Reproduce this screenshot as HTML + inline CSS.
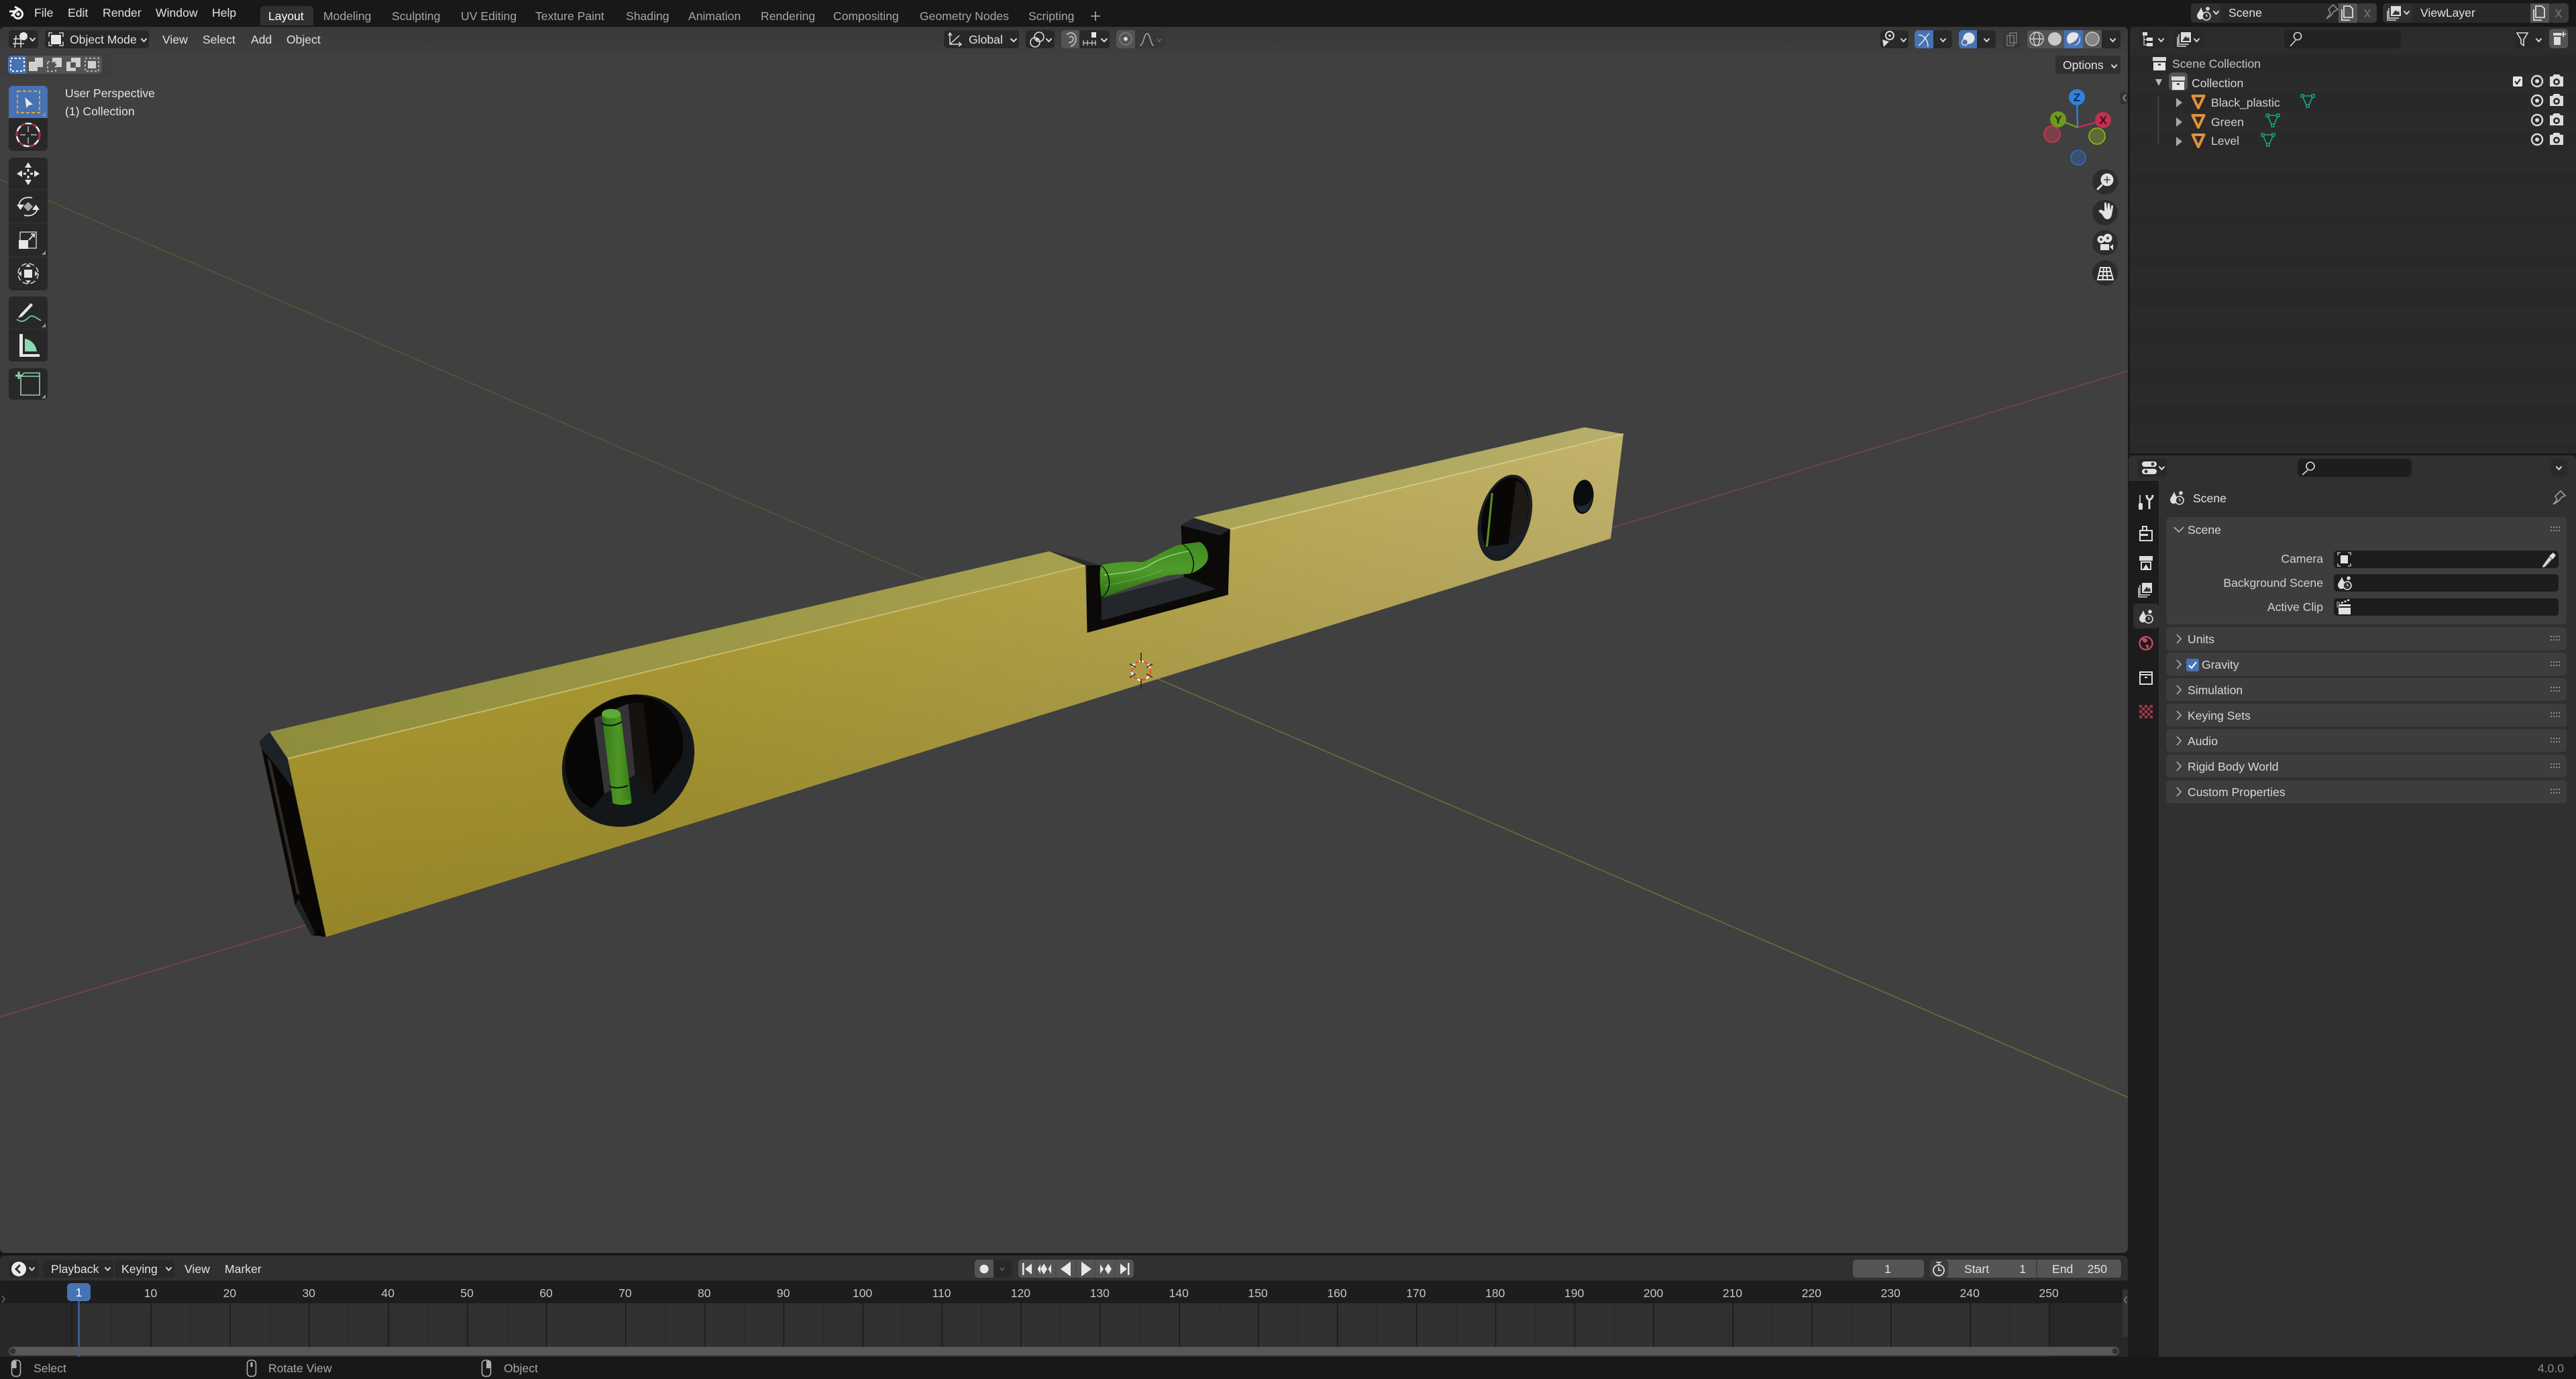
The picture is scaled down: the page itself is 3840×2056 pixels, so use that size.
<!DOCTYPE html>
<html><head><meta charset="utf-8"><title>Blender</title>
<style>
html,body{margin:0;padding:0;background:#181818;width:3840px;height:2056px;overflow:hidden}
svg{display:block;position:absolute;left:0;top:0}
text{font-family:"Liberation Sans",sans-serif;font-size:17.6px;fill:#e2e2e2}
.dim{fill:#a6a6a6}
.lbl{fill:#d0d0d0;text-anchor:end}
.rul{fill:#c4c4c4;text-anchor:middle}
.st{fill:#a8a8a8}
.ch{fill:none;stroke:#dcdcdc;stroke-width:2;stroke-linecap:round;stroke-linejoin:round}
.btn{fill:#282828}
.ln{fill:none;stroke:#dcdcdc;stroke-width:2;stroke-linejoin:round;stroke-linecap:round}
</style></head><body>
<svg width="3840" height="2056" viewBox="0 0 3840 2056" xmlns="http://www.w3.org/2000/svg">
<defs>
<linearGradient id="hdr" x1="0" y1="40" x2="0" y2="84" gradientUnits="userSpaceOnUse"><stop offset="0" stop-color="#383838"/><stop offset="1" stop-color="#404040"/></linearGradient>
<linearGradient id="front" x1="430" y1="0" x2="2420" y2="0" gradientUnits="userSpaceOnUse"><stop offset="0" stop-color="#a3912c"/><stop offset=".3" stop-color="#a69632"/><stop offset=".65" stop-color="#b3a34c"/><stop offset="1" stop-color="#c3b36c"/></linearGradient>
<linearGradient id="shade" x1="900" y1="1010" x2="960" y2="1260" gradientUnits="userSpaceOnUse"><stop offset="0" stop-color="#000" stop-opacity="0"/><stop offset="1" stop-color="#000" stop-opacity=".08"/></linearGradient>
<linearGradient id="topf" x1="402" y1="0" x2="2400" y2="0" gradientUnits="userSpaceOnUse"><stop offset="0" stop-color="#8e8d3c"/><stop offset=".6" stop-color="#a5a04f"/><stop offset="1" stop-color="#b6ae6a"/></linearGradient>
<linearGradient id="vialg" x1="0" y1="0" x2="1" y2="0"><stop offset="0" stop-color="#337a18"/><stop offset=".55" stop-color="#4f9626"/><stop offset="1" stop-color="#347a18"/></linearGradient>
<linearGradient id="bub" x1="0" y1="560" x2="0" y2="820" gradientUnits="userSpaceOnUse"><stop offset="0" stop-color="#3f8a1f"/><stop offset=".5" stop-color="#4f9a2a"/><stop offset="1" stop-color="#2c6c14"/></linearGradient>
<pattern id="ticks" x="224.5" y="1943" width="117.9" height="65" patternUnits="userSpaceOnUse"><rect x="0" width="1.5" height="65" fill="#191919"/><rect x="59" width="1.5" height="65" fill="#2a2a2a"/></pattern>
<pattern id="stripes" x="0" y="81" width="10" height="58" patternUnits="userSpaceOnUse"><rect width="10" height="29" fill="#292929"/><rect y="29" width="10" height="29" fill="#2b2b2b"/></pattern>
<clipPath id="h1"><ellipse cx="930.4" cy="1124.5" rx="95" ry="80" transform="rotate(-45 930.4 1124.5)"/></clipPath>
<clipPath id="h2"><ellipse cx="2243.4" cy="772" rx="33" ry="58" transform="rotate(16 2243.4 772)"/></clipPath>
<symbol id="scene" overflow="visible"><path d="M-4-9C-2-3 1 0 1 3 1 7-2 9-5 9-8 9-10 6-10 3-10 0-6-3-4-9Z" fill="#dcdcdc"/><circle cx="6" cy="-7" r="2.8" fill="#dcdcdc"/><circle cx="4" cy="4" r="6" fill="#303030" stroke="#dcdcdc" stroke-width="1.6"/><path d="M4 1v3h2" fill="none" stroke="#dcdcdc" stroke-width="1.2"/></symbol>
<symbol id="eye" overflow="visible"><circle r="8" fill="none" stroke="#dcdcdc" stroke-width="2.4"/><circle r="3" fill="#dcdcdc"/></symbol>
<symbol id="cam" overflow="visible"><path d="M-10-6h4l2-3h8l2 3h4v15h-20z" fill="#dcdcdc"/><circle cy="2" r="5" fill="#2a2a2a"/><circle cy="2" r="2.4" fill="#dcdcdc"/></symbol>
<symbol id="mesh" overflow="visible"><path d="M-8.5-9H8.5L0 9Z" fill="none" stroke="#e0913a" stroke-width="4" stroke-linejoin="round"/></symbol>
<symbol id="md" overflow="visible"><path d="M-8-7H8L1 9H-1Z" fill="none" stroke="#13b08c" stroke-width="1.5"/><g fill="#282828" stroke="#13b08c" stroke-width="1.4"><rect x="-10" y="-9" width="4" height="4"/><rect x="6" y="-9" width="4" height="4"/><rect x="-2" y="6" width="4" height="4"/></g></symbol>
<symbol id="grip" overflow="visible"><g fill="#8e8e8e"><rect x="0" y="0" width="2" height="2"/><rect x="4" y="0" width="2" height="2"/><rect x="8" y="0" width="2" height="2"/><rect x="12" y="0" width="2" height="2"/><rect x="0" y="5" width="2" height="2"/><rect x="4" y="5" width="2" height="2"/><rect x="8" y="5" width="2" height="2"/><rect x="12" y="5" width="2" height="2"/></g></symbol>
<symbol id="crn" overflow="visible"><path d="M6-6V0H0Z" fill="#8f8f8f"/></symbol>
<symbol id="mouse" overflow="visible"><rect x="-6.5" y="-12" width="13" height="24" rx="5" fill="none" stroke="#b0b0b0" stroke-width="1.6"/></symbol>
<symbol id="coll" overflow="visible"><rect x="-10" y="-10" width="20" height="6" fill="#d8d8d8"/><path d="M-9-2H9V10H-9Z" fill="#e6e6e6"/><rect x="-2" y="0" width="4" height="2.5" fill="#333"/></symbol>
<symbol id="doc" overflow="visible"><path d="M-6-11H3L7-7V6H-6Z" fill="none" stroke="#dcdcdc" stroke-width="1.8"/><path d="M-9-6V10H3" fill="none" stroke="#dcdcdc" stroke-width="1.8"/></symbol>
<symbol id="vlayer" overflow="visible"><rect x="-6" y="-10" width="15" height="15" fill="#dcdcdc"/><path d="M-4 3 1-4 4-1 6-3 7 3Z" fill="#333"/><path d="M-9-7V8H6M-11-3V11H2" fill="none" stroke="#dcdcdc" stroke-width="1.4"/></symbol>
</defs>

<!-- app bg -->
<rect width="3840" height="2056" fill="#181818"/>

<!-- VIEWPORT -->
<rect x="0" y="40" width="3172" height="1828" rx="7" fill="#404040"/>
<path d="M7 40H3165a7 7 0 0 1 7 7V84H0V47a7 7 0 0 1 7-7Z" fill="url(#hdr)"/>

<!-- axes -->
<line x1="0" y1="1516" x2="470" y2="1375" stroke="#83404e" stroke-width="1.6"/>
<line x1="2400" y1="788" x2="3172" y2="553" stroke="#7b434e" stroke-width="1.6"/>
<line x1="0" y1="268" x2="1420" y2="881" stroke="#4f5a38" stroke-width="1.6"/>
<line x1="1700" y1="1001" x2="3172" y2="1636" stroke="#5f7034" stroke-width="1.7"/>

<!-- model top faces -->
<polygon points="402,1091 429,1131 1618,843 1564,822" fill="url(#topf)"/>
<polygon points="1778.6,771.5 2362,637 2420,647 1833.7,789" fill="url(#topf)"/>
<!-- left cap -->
<polygon points="386.7,1105 401.7,1092 428,1131 486,1397 464,1394 440,1350 390,1117" fill="#090705"/>
<polygon points="386.7,1105 401.7,1092 428,1131 436,1175 410,1140 390,1117" fill="#1d2226"/>
<polygon points="440,1350 445,1340 470,1392 464,1394" fill="#1d2226"/>
<polygon points="398,1130 404,1136 447,1335 442,1332" fill="#302b25"/>
<!-- front -->
<polygon points="429,1131 1618,843 1620.6,943.3 1830.7,886.7 1833.7,789 2420,647 2401,803 486,1397" fill="url(#front)"/>
<polygon points="429,1131 1618,843 1620.6,943.3 1830.7,886.7 1833.7,789 2420,647 2401,803 486,1397" fill="url(#shade)"/>
<line x1="429" y1="1131" x2="1618" y2="843" stroke="#c9b96c" stroke-width="2"/>
<line x1="1834" y1="789" x2="2420" y2="647" stroke="#d4c883" stroke-width="2"/>

<!-- notch -->
<polygon points="1564.3,821.7 1618,843 1641,843 1600,830" fill="#2a2c2e"/>
<polygon points="1619.4,842.7 1642,842.7 1642,925 1812.3,878.3 1764.5,860 1760.3,783.3 1778.6,772.7 1833.7,789.3 1830.7,886.7 1620.6,943.3" fill="#0c0a08"/>
<polygon points="1642,891.7 1642,925 1812.3,878.3 1764.5,860" fill="#23272b"/>
<polygon points="1760.3,783.3 1778.6,772.7 1833.7,789.3 1818.4,798.3" fill="#23262a"/>
<g transform="translate(1500,620) scale(.6124,.3333)">
<path d="M230 668C260 655 300 648 330 655 355 640 380 605 415 580 440 570 455 568 472 564 488 585 494 615 490 645 484 670 470 690 450 705 425 712 400 705 375 725 340 740 300 770 232 815 228 770 226 720 230 668Z" fill="url(#bub)"/>
<path d="M238 712C280 705 320 695 345 672 365 645 400 620 445 605" fill="none" stroke="#b6e49a" stroke-width="4" opacity=".75"/>
<path d="M240 760C290 740 340 725 380 690" fill="none" stroke="#7cba58" stroke-width="4" opacity=".5"/>
<path d="M230 668C252 700 262 770 232 815" fill="none" stroke="#0b0d08" stroke-width="2.5"/>
<path d="M430 574C456 610 462 670 450 705" fill="none" stroke="#0b0d08" stroke-width="2.5"/>
</g>

<!-- large hole -->
<ellipse cx="936.5" cy="1134" rx="105" ry="92" transform="rotate(-45 936.5 1134)" fill="#14171a"/>
<ellipse cx="930.4" cy="1124.5" rx="95" ry="80" transform="rotate(-45 930.4 1124.5)" fill="#080604"/>
<g clip-path="url(#h1)">
<polygon points="885.5,1071 936.5,1049 946.7,1155 901,1184" fill="#343436"/>
<polygon points="936.5,1049 959,1047 975,1186 946.7,1155" fill="#15120f"/>
<polygon points="901,1184 947,1155 975,1186 1018,1126 1030,1230 860,1230" fill="#14171a"/>
</g>
<polygon points="897,1065 925,1063 941.6,1194 913.6,1198" fill="url(#vialg)"/>
<ellipse cx="911" cy="1064" rx="14" ry="7" fill="#5cac38"/>
<ellipse cx="927.6" cy="1196" rx="14" ry="4" fill="#4b9424"/>
<path d="M896 1078C905 1084 918 1082 927 1076" fill="none" stroke="#0c120a" stroke-width="2"/>
<path d="M908 1172C917 1176 928 1175 936 1171" fill="none" stroke="#0c120a" stroke-width="2"/>

<!-- right hole -->
<ellipse cx="2243.4" cy="772" rx="38" ry="66" transform="rotate(16 2243.4 772)" fill="#1a1e22"/>
<ellipse cx="2243.4" cy="768" rx="33" ry="58" transform="rotate(16 2243.4 768)" fill="#090705"/>
<g clip-path="url(#h2)"><polygon points="2262,700 2290,700 2270,800 2248,815" fill="#1e1a15"/><polygon points="2215,815 2248,811 2270,790 2270,840 2215,840" fill="#1a2025"/></g>
<line x1="2224.4" y1="735" x2="2216.5" y2="815" stroke="#5c8e22" stroke-width="3"/>
<ellipse cx="2360.4" cy="740.7" rx="15" ry="25.5" transform="rotate(6 2360.4 740.7)" fill="#0a0c0e"/>
<path d="M2349 752C2352 764 2362 768 2368 758 2373 750 2374 745 2374 740 2370 752 2358 758 2349 752Z" fill="#1c2833"/>

<!-- 3d cursor -->
<circle cx="1701" cy="1000" r="14" fill="none" stroke="#f4f4f4" stroke-width="2.5"/>
<circle cx="1701" cy="1000" r="14" fill="none" stroke="#e8501e" stroke-width="2.5" stroke-dasharray="7 7"/>
<path d="M1701 973V988M1701 1012V1028M1684 990l9 5M1718 990l-9 5M1684 1010l9-5M1718 1010l-9-5" stroke="#222" stroke-width="1.5" fill="none"/>

<!-- top bar -->
<g fill="none" stroke="#f0f0f0" stroke-width="3"><circle cx="27" cy="21" r="6.5"/><path d="M14 17H24M17 24 27 14M22 10 31 15"/></g><circle cx="27" cy="21" r="2.6" fill="#f0f0f0"/>
<text x="51" y="25">File</text><text x="101" y="25">Edit</text><text x="153" y="25">Render</text><text x="232" y="25">Window</text><text x="316" y="25">Help</text>
<path d="M394 9H461a6 6 0 0 1 6 6V38H388V15a6 6 0 0 1 6-6Z" fill="#303030"/>
<text x="400" y="30" style="fill:#fff">Layout</text>
<g>
<text class="dim" x="482" y="30">Modeling</text><text class="dim" x="584" y="30">Sculpting</text><text class="dim" x="687" y="30">UV Editing</text><text class="dim" x="798" y="30">Texture Paint</text><text class="dim" x="933" y="30">Shading</text><text class="dim" x="1026" y="30">Animation</text><text class="dim" x="1134" y="30">Rendering</text><text class="dim" x="1242" y="30">Compositing</text><text class="dim" x="1371" y="30">Geometry Nodes</text><text class="dim" x="1533" y="30">Scripting</text>
</g>
<path d="M1633 17V31M1626 24H1640" stroke="#b0b0b0" stroke-width="1.6"/>

<!-- Scene / ViewLayer widgets -->
<rect x="3266" y="5" width="277" height="29" rx="5" fill="#282828"/>
<rect x="3486" y="5" width="28" height="29" fill="#545454"/><rect x="3514" y="5" width="29" height="29" rx="5" fill="#3a3a3a"/>
<rect x="3266" y="5" width="44" height="29" rx="5" fill="#303030"/>
<use href="#scene" x="3285" y="20"/><path class="ch" d="M3300 17l3.500 4 3.500-4"/>
<text x="3322" y="25">Scene</text>
<path d="M3468 28l6-8-3-6 7-7 7 7-6 3-4 6z" fill="none" stroke="#8a8a8a" stroke-width="1.6"/>
<use href="#doc" x="3500" y="20"/><path d="M3525 14l8 12M3533 14l-8 12" stroke="#6e6e6e" stroke-width="1.8"/>
<rect x="3552" y="5" width="277" height="29" rx="5" fill="#282828"/>
<rect x="3772" y="5" width="28" height="29" fill="#545454"/><rect x="3800" y="5" width="29" height="29" rx="5" fill="#3a3a3a"/>
<rect x="3552" y="5" width="44" height="29" rx="5" fill="#303030"/>
<use href="#vlayer" x="3570" y="19"/><path class="ch" d="M3584 17l3.500 4 3.500-4"/>
<text x="3608" y="25">ViewLayer</text>
<use href="#doc" x="3786" y="20"/><path d="M3810 14l8 12M3818 14l-8 12" stroke="#6e6e6e" stroke-width="1.8"/>

<!-- viewport header left -->
<rect class="btn" x="13" y="45" width="44" height="27" rx="5"/>
<path d="M20 58H36M19 65H36M24 53 22 71M31 53V71" stroke="#dcdcdc" stroke-width="1.5" fill="none"/><circle cx="35" cy="54" r="6" fill="#e6e6e6"/><path class="ch" d="M45 57l3.500 4 3.500-4"/>
<rect class="btn" x="67" y="45" width="155" height="27" rx="5"/>
<path d="M73 55V49H78M88 49H94V55M73 62V68H78M88 68H94V62" fill="none" stroke="#cfcfcf" stroke-width="1.5"/><rect x="76" y="52" width="15" height="14" fill="#e6e6e6"/>
<text x="104" y="65">Object Mode</text><path class="ch" d="M211 58l3.500 4 3.500-4"/>
<text x="242" y="65">View</text><text x="302" y="65">Select</text><text x="374" y="65">Add</text><text x="427" y="65">Object</text>

<!-- select modes -->
<rect x="0" y="80" width="165" height="36" fill="#3a3a3a" opacity=".5"/>
<rect x="12" y="83" width="140" height="27" rx="5" fill="#545454"/>
<path d="M17 83H39V110H17a5 5 0 0 1-5-5V88a5 5 0 0 1 5-5Z" fill="#4772b3"/>
<rect x="16" y="87" width="20" height="19" fill="none" stroke="#fff" stroke-width="2" stroke-dasharray="3 3"/>
<path d="M43 106V92H52V86H64V100H56V106Z" fill="#cfcfcf"/>
<rect x="71" y="92" width="12" height="14" fill="none" stroke="#cfcfcf" stroke-width="1.6" stroke-dasharray="3 3"/><path d="M78 86H92V100H84V92H78Z" fill="#cfcfcf"/>
<path d="M99 92H106V86H120V100H113V106H99ZM105 98V100H107V98Z" fill="#cfcfcf"/><rect x="105" y="93" width="8" height="8" fill="#555"/>
<rect x="127" y="87" width="20" height="19" fill="none" stroke="#cfcfcf" stroke-width="1.6" stroke-dasharray="3 3"/><rect x="131" y="91" width="12" height="11" fill="#cfcfcf"/>

<!-- Tools -->
<rect x="13" y="128" width="58" height="97" rx="6" fill="#282828"/>
<path d="M19 128H65a6 6 0 0 1 6 6V176H13V134a6 6 0 0 1 6-6Z" fill="#4772b3"/>
<rect x="26" y="136" width="33" height="32" fill="none" stroke="#f0a523" stroke-width="2" stroke-dasharray="5 3"/>
<path d="M37.300 145 49 156 43 156.700 39.300 161Z" fill="#e8e8e8"/><use href="#crn" x="62" y="173"/>
<circle cx="42" cy="201" r="17" fill="none" stroke="#f0f0f0" stroke-width="2.6"/><circle cx="42" cy="201" r="17" fill="none" stroke="#b0283a" stroke-width="2.6" stroke-dasharray="8 9"/>
<path d="M42 188V197M42 205V214M30 201H38M46 201H55" stroke="#b8b8b8" stroke-width="1.5"/>
<rect x="13" y="235" width="58" height="198" rx="6" fill="#282828"/>
<path d="M13 283H71M13 333H71M13 383H71" stroke="#333" stroke-width="1"/>
<g fill="#e6e6e6"><path d="M42 242 47 250H37ZM42 276 37 268H47ZM25 259 33 254V264ZM59 259 51 264V254Z"/><rect x="40.500" y="252" width="3" height="4"/><rect x="40.500" y="262" width="3" height="4"/><rect x="35" y="257.500" width="4" height="3"/><rect x="45" y="257.500" width="4" height="3"/></g>
<path d="M28 306C30 296 38 293 48 295M56 310C54 320 46 323 36 321" fill="none" stroke="#e6e6e6" stroke-width="1.8"/>
<path d="M42 301 49 308 42 315 35 308Z" fill="#a8a8a8"/><path d="M25 305H36L30.500 313ZM48 313H59L53.500 305Z" fill="#e6e6e6"/>
<rect x="30" y="346" width="24" height="24" fill="none" stroke="#bdbdbd" stroke-width="1.6"/><rect x="28" y="358" width="14" height="13" fill="#e6e6e6"/><path d="M43 358 51 349M46 349H51V354" fill="none" stroke="#e6e6e6" stroke-width="1.8"/><use href="#crn" x="62" y="380"/>
<circle cx="42" cy="408" r="15" fill="none" stroke="#cfcfcf" stroke-width="1.6" stroke-dasharray="8 4"/><rect x="36" y="402" width="12" height="12" fill="#e6e6e6"/><path d="M42 393 46 398H38ZM42 423 38 418H46ZM27 408 32 404V412ZM57 408 52 412V404Z" fill="#cfcfcf"/>
<rect x="13" y="442" width="58" height="97" rx="6" fill="#282828"/>
<path d="M13 490H71" stroke="#333"/>
<path d="M30 469 46 452 49 455 33 472 27 474Z" fill="#e6e6e6"/><path d="M25 476C32 482 38 478 43 473 48 468 54 474 61 478" fill="none" stroke="#79c9a6" stroke-width="1.8"/><use href="#crn" x="62" y="488"/>
<path d="M29 498H34V528H59V532H29Z" fill="#e6e6e6"/><path d="M37 522V505C47 507 53 513 55 524H37Z" fill="#8cd8b0"/>
<rect x="13" y="549" width="58" height="47" rx="6" fill="#282828"/>
<path d="M31 561H59V589H31ZM31 561 36 556H59V584L59 589M59 561V556" fill="none" stroke="#8ed3ac" stroke-width="1.6"/>
<path d="M28 554V565M23 560H34" stroke="#8ed3ac" stroke-width="3"/><use href="#crn" x="62" y="594"/>
<text x="97" y="145">User Perspective</text><text x="97" y="172">(1) Collection</text>

<!-- center header -->
<rect class="btn" x="1407" y="45" width="112" height="27" rx="5"/>
<path d="M1416 50V66H1432M1416 66 1430 53M1414 53 1416 49 1419 53M1429 63 1433 66 1429 69" fill="none" stroke="#dcdcdc" stroke-width="1.5"/>
<text x="1444" y="65">Global</text><path class="ch" d="M1507 58l4 4 4-4"/>
<rect class="btn" x="1529" y="45" width="43" height="27" rx="5"/>
<circle cx="1549" cy="55" r="7" fill="none" stroke="#dcdcdc" stroke-width="1.6"/><circle cx="1543" cy="63" r="7" fill="none" stroke="#dcdcdc" stroke-width="1.6"/><circle cx="1546" cy="59" r="2" fill="#dcdcdc"/><path class="ch" d="M1560 58l3.500 4 3.500-4"/>
<rect class="btn" x="1582" y="45" width="72" height="27" rx="5"/><path d="M1587 45H1609V72H1587a5 5 0 0 1-5-5V50a5 5 0 0 1 5-5Z" fill="#545454"/>
<path d="M1590 52C1594 47 1604 48 1604 58 1604 64 1600 68 1596 69M1594 56C1596 53 1600 54 1600 58 1600 61 1597 63 1593 64" fill="none" stroke="#b4b4b4" stroke-width="2"/>
<rect x="1627" y="48" width="7" height="8" fill="#e6e6e6"/><path d="M1614 64H1634M1615 60V68M1621 60V68M1628 60V68M1633 60V68" stroke="#cfcfcf" stroke-width="1.2"/><path class="ch" d="M1642 58l4 4 4-4"/>
<rect x="1664" y="45" width="73" height="27" rx="5" fill="#373737"/><path d="M1669 45H1692V72H1669a5 5 0 0 1-5-5V50a5 5 0 0 1 5-5Z" fill="#545454"/>
<circle cx="1678" cy="58" r="9" fill="none" stroke="#808080" stroke-width="1.5"/><circle cx="1678" cy="58" r="3" fill="#d8d8d8"/>
<path d="M1699 68C1705 68 1705 50 1710 50 1715 50 1715 68 1720 68" fill="none" stroke="#a6a6a6" stroke-width="1.5"/><path d="M1725 58l3 4 3-4" fill="none" stroke="#666" stroke-width="1.5"/>

<!-- right header -->
<rect class="btn" x="2803" y="45" width="42" height="27" rx="5"/>
<circle cx="2817" cy="53" r="6" fill="none" stroke="#dcdcdc" stroke-width="2"/><circle cx="2817" cy="53" r="1.8" fill="#dcdcdc"/><path d="M2806 59 2816 62 2808 70Z" fill="#dcdcdc"/><path class="ch" d="M2834 58l3.500 4 3.500-4"/>
<rect class="btn" x="2854" y="45" width="56" height="27" rx="5"/><path d="M2859 45H2882V72H2859a5 5 0 0 1-5-5V50a5 5 0 0 1 5-5Z" fill="#4772b3"/>
<path d="M2860 68C2870 60 2872 52 2876 50M2860 52C2868 52 2874 60 2874 70" fill="none" stroke="#e6e6e6" stroke-width="1.5"/><path class="ch" d="M2893 58l3.500 4 3.500-4"/>
<rect class="btn" x="2920" y="45" width="55" height="27" rx="5"/><path d="M2925 45H2947V72H2925a5 5 0 0 1-5-5V50a5 5 0 0 1 5-5Z" fill="#4772b3"/>
<circle cx="2935" cy="57" r="8.500" fill="#e6e6e6"/><circle cx="2929" cy="63" r="4.500" fill="#4772b3" stroke="#e6e6e6" stroke-width="1.3"/><path class="ch" d="M2958 58l3.500 4 3.500-4"/>
<rect x="2986" y="45" width="26" height="27" rx="5" fill="#373737"/><rect x="2996" y="49" width="10" height="15" fill="none" stroke="#7a7a7a" stroke-width="1.4"/><rect x="2992" y="53" width="10" height="15" fill="none" stroke="#7a7a7a" stroke-width="1.4"/>
<rect x="3022" y="45" width="139" height="27" rx="5" fill="#282828"/>
<path d="M3027 45H3133V72H3027a5 5 0 0 1-5-5V50a5 5 0 0 1 5-5Z" fill="#545454"/>
<rect x="3077" y="45" width="28" height="27" fill="#4772b3"/>
<g fill="none" stroke="#cfcfcf" stroke-width="1.4"><circle cx="3036" cy="58" r="10"/><ellipse cx="3036" cy="58" rx="4.500" ry="10"/><path d="M3026 58H3046"/></g>
<circle cx="3063" cy="58" r="10" fill="#c8c8c8"/>
<circle cx="3091" cy="58" r="10" fill="#e6e6e6"/><path d="M3084 65C3092 64 3098 58 3099 50 3102 58 3098 68 3089 68Z" fill="#4772b3"/>
<circle cx="3119" cy="58" r="10" fill="#848484" stroke="#cfcfcf" stroke-width="1.4"/><path class="ch" d="M3146 58l3.500 4 3.500-4"/>
<rect x="3064" y="83" width="97" height="27" rx="5" fill="#303030"/>
<text x="3075" y="103">Options</text><path class="ch" d="M3148 97l3.500 4 3.500-4"/>

<!-- gizmo -->
<line x1="3097" y1="190" x2="3096" y2="150" stroke="#2e82dc" stroke-width="2.5"/>
<line x1="3097" y1="190" x2="3130" y2="181" stroke="#c03050" stroke-width="2.5"/>
<line x1="3097" y1="190" x2="3072" y2="180" stroke="#6f9a20" stroke-width="2.5"/>
<circle cx="3059" cy="200" r="12" fill="#7a4048" stroke="#e0304f" stroke-width="1.6"/>
<circle cx="3126" cy="203" r="12" fill="#5f6a38" stroke="#8fc010" stroke-width="1.6"/>
<circle cx="3098" cy="235" r="11" fill="#3d5070" stroke="#2a70c0" stroke-width="1.6"/>
<circle cx="3096" cy="145" r="12" fill="#2e82dc"/><circle cx="3135" cy="179" r="12" fill="#c03050"/><circle cx="3068" cy="178" r="12" fill="#6f9a20"/>
<text x="3096" y="151" style="font-weight:bold;fill:#0e2a4a;text-anchor:middle;font-size:17px">Z</text>
<text x="3135" y="185" style="font-weight:bold;fill:#3d0e18;text-anchor:middle;font-size:17px">X</text>
<text x="3068" y="184" style="font-weight:bold;fill:#1f2e08;text-anchor:middle;font-size:17px">Y</text>
<rect x="3160" y="137" width="12" height="18" rx="3" fill="#333"/><path d="M3169 141l-4 5 4 5" fill="none" stroke="#9a9a9a" stroke-width="1.6"/>
<g fill="#2c2c2c"><circle cx="3138" cy="271" r="19"/><circle cx="3138" cy="317" r="19"/><circle cx="3138" cy="362" r="19"/><circle cx="3138" cy="407" r="19"/></g>
<circle cx="3141" cy="268" r="9.500" fill="#e2e2e2"/><path d="M3141 263V273M3136 268H3146" stroke="#222" stroke-width="1.3"/><path d="M3133 276 3127 282" stroke="#e2e2e2" stroke-width="3" stroke-linecap="round"/>
<path d="M3129 316C3133 318 3135 322 3137 325 3142 329 3147 326 3148 320L3150 308C3150 305 3147 305 3147 308L3146 314 3145 305C3145 302 3142 302 3142 305L3141 313 3140 304C3140 301 3137 301 3137 304V315L3133 313C3130 312 3128 314 3129 316Z" fill="#e2e2e2"/>
<circle cx="3132" cy="357" r="5.500" fill="#e2e2e2"/><circle cx="3142" cy="355" r="6.500" fill="#e2e2e2"/><circle cx="3132" cy="357" r="2" fill="#444"/><circle cx="3142" cy="355" r="2" fill="#444"/><rect x="3131" y="364" width="13" height="9" fill="#e2e2e2"/><path d="M3145 368 3150 364V373Z" fill="#e2e2e2"/>
<path d="M3131 399H3145L3150 417H3127ZM3129.500 405H3146.500M3128 411H3148.500M3136 399 3134.500 417M3140 399 3141.500 417" fill="none" stroke="#e2e2e2" stroke-width="2"/>

<!-- OUTLINER -->
<rect x="3175" y="40" width="665" height="636" rx="7" fill="#2a2a2a"/>
<rect x="3175" y="81" width="665" height="595" fill="url(#stripes)"/>
<path d="M3182 40H3840V81H3175V47a7 7 0 0 1 7-7Z" fill="#2c2c2c"/>
<rect class="btn" x="3187" y="43" width="44" height="29" rx="5"/>
<g fill="#dcdcdc"><rect x="3194" y="48" width="7" height="5"/><rect x="3200" y="56" width="9" height="5"/><rect x="3200" y="64" width="9" height="5"/></g><path d="M3196 53V67H3200M3196 59H3200" fill="none" stroke="#dcdcdc" stroke-width="1.2"/><path class="ch" d="M3218 58l3.500 4 3.500-4"/>
<rect class="btn" x="3240" y="43" width="45" height="29" rx="5"/><use href="#vlayer" x="3257" y="58"/><path class="ch" d="M3271 58l3.500 4 3.500-4"/>
<rect x="3405" y="45" width="174" height="27" rx="6" fill="#222"/><circle cx="3425" cy="54" r="5.500" fill="none" stroke="#dcdcdc" stroke-width="1.6"/><path d="M3422 60 3414 69" stroke="#dcdcdc" stroke-width="1.6"/>
<rect class="btn" x="3748" y="43" width="45" height="29" rx="5"/><path d="M3752 49H3768L3762 59V68L3758 65V59Z" fill="none" stroke="#dcdcdc" stroke-width="1.6"/><path class="ch" d="M3781 58l3.500 4 3.500-4"/>
<rect x="3800" y="43" width="28" height="29" rx="5" fill="#545454"/>
<path d="M3806 49H3818V53H3806ZM3807 55H3817V67H3807Z" fill="#dcdcdc"/><path d="M3821 47V55M3817 51H3825" stroke="#dcdcdc" stroke-width="1.8"/>
<use href="#coll" x="3219" y="95"/><text x="3238" y="101" style="fill:#c4c4c4">Scene Collection</text>
<rect x="3233" y="108" width="28" height="27" rx="6" fill="#545454"/>
<path d="M3213 118H3223L3218 128Z" fill="#b8b8b8"/>
<use href="#coll" x="3247" y="124"/><text x="3267" y="130" style="fill:#d8d8d8">Collection</text>
<line x1="3217.500" y1="143" x2="3217.500" y2="216" stroke="#4a4a4a" stroke-width="1.500"/>
<g fill="#a8a8a8"><path d="M3244 146V160L3253 153Z"/><path d="M3244 175V189L3253 182Z"/><path d="M3244 204V218L3253 211Z"/></g>
<use href="#mesh" x="3277" y="152"/><use href="#mesh" x="3277" y="181"/><use href="#mesh" x="3277" y="210"/>
<text x="3296" y="159" style="fill:#d0d0d0">Black_plastic</text><text x="3296" y="188" style="fill:#d0d0d0">Green</text><text x="3296" y="216" style="fill:#d0d0d0">Level</text>
<use href="#md" x="3440" y="150"/><use href="#md" x="3388" y="179"/><use href="#md" x="3381" y="208"/>
<rect x="3746" y="114" width="14" height="15" rx="2" fill="#e8e8e8"/><path d="M3749 121l3 4 5-7" fill="none" stroke="#222" stroke-width="2"/>
<use href="#eye" x="3782" y="121"/><use href="#eye" x="3782" y="150"/><use href="#eye" x="3782" y="179"/><use href="#eye" x="3782" y="208"/>
<use href="#cam" x="3811" y="120"/><use href="#cam" x="3811" y="149"/><use href="#cam" x="3811" y="178"/><use href="#cam" x="3811" y="207"/>

<!-- PROPERTIES -->
<rect x="3173" y="679" width="667" height="1344" rx="7" fill="#303030"/>
<rect x="3173" y="717" width="45" height="1306" fill="#1c1c1c"/>
<rect class="btn" x="3187" y="684" width="43" height="27" rx="5"/>
<rect x="3193" y="688" width="22" height="8" rx="4" fill="#e0e0e0"/><rect x="3193" y="699" width="22" height="8" rx="4" fill="#e0e0e0"/><circle cx="3209" cy="692" r="2.500" fill="#333"/><circle cx="3199" cy="703" r="2.500" fill="#333"/><path class="ch" d="M3219 696l3.500 4 3.500-4"/>
<rect x="3425" y="684" width="170" height="27" rx="6" fill="#1d1d1d"/><circle cx="3444" cy="695" r="6" fill="none" stroke="#dcdcdc" stroke-width="1.6"/><path d="M3440 701 3432 708" stroke="#dcdcdc" stroke-width="1.6"/>
<rect x="3802" y="684" width="25" height="27" rx="5" fill="#2a2a2a"/><path class="ch" d="M3811 696l3.500 4 3.500-4"/>
<!-- tabs -->
<rect x="3180" y="900" width="38" height="37" rx="5" fill="#303030"/>
<path d="M3190 738V750" stroke="#dcdcdc" stroke-width="1.6"/><rect x="3188" y="750" width="6" height="10" rx="2" fill="#dcdcdc"/><path d="M3200 738C3200 744 3204 745 3204 745V759M3209 738C3209 744 3204 745 3204 745" fill="none" stroke="#dcdcdc" stroke-width="3"/>
<path d="M3190 791H3208V806H3190ZM3194 791V785H3200V791" fill="none" stroke="#dcdcdc" stroke-width="2"/><rect x="3191" y="796" width="11" height="3" fill="#dcdcdc"/>
<path d="M3189 829H3209V836H3189Z" fill="#dcdcdc"/><path d="M3192 838H3206V849H3192Z" fill="none" stroke="#dcdcdc" stroke-width="2"/><path d="M3195 848 3199 841 3203 848Z" fill="#dcdcdc"/>
<use href="#vlayer" x="3199" y="879"/>
<use href="#scene" x="3199" y="919"/>
<circle cx="3199" cy="959" r="9.500" fill="none" stroke="#c5485d" stroke-width="2.500"/><path d="M3193 953C3197 950 3202 952 3201 956 3199 958 3197 959 3195 957ZM3199 961C3203 961 3205 963 3201 967 3199 964 3198 962 3199 961Z" fill="#c5485d"/>
<path d="M3189 1002H3209M3190 1002V1006H3208V1002M3190 1006V1020H3208V1006" fill="none" stroke="#dcdcdc" stroke-width="2"/><rect x="3197" y="1009" width="4" height="2" fill="#dcdcdc"/>
<rect x="3189" y="1051" width="20" height="20" fill="#9e3a4c"/><g fill="#2a1c1e"><rect x="3193" y="1051" width="4" height="4"/><rect x="3201" y="1051" width="4" height="4"/><rect x="3189" y="1055" width="4" height="4"/><rect x="3197" y="1055" width="4" height="4"/><rect x="3205" y="1055" width="4" height="4"/><rect x="3193" y="1059" width="4" height="4"/><rect x="3201" y="1059" width="4" height="4"/><rect x="3189" y="1063" width="4" height="4"/><rect x="3197" y="1063" width="4" height="4"/><rect x="3205" y="1063" width="4" height="4"/><rect x="3193" y="1067" width="4" height="4"/><rect x="3201" y="1067" width="4" height="4"/></g>
<use href="#scene" x="3245" y="742"/><text x="3269" y="749">Scene</text>
<path d="M3806 752l6-7-3-5 8-8 7 7-5 2-5 6z" fill="none" stroke="#a0a0a0" stroke-width="1.6"/>
<!-- panels -->
<g fill="#3d3d3d"><rect x="3229" y="771" width="597" height="160" rx="6"/><rect x="3229" y="935" width="597" height="34.500" rx="6"/><rect x="3229" y="973" width="597" height="34.500" rx="6"/><rect x="3229" y="1011" width="597" height="34.500" rx="6"/><rect x="3229" y="1049" width="597" height="34.500" rx="6"/><rect x="3229" y="1087" width="597" height="34.500" rx="6"/><rect x="3229" y="1125" width="597" height="34.500" rx="6"/><rect x="3229" y="1163" width="597" height="34.500" rx="6"/></g>
<use href="#grip" x="3802" y="785"/><use href="#grip" x="3802" y="948"/><use href="#grip" x="3802" y="986"/><use href="#grip" x="3802" y="1024"/><use href="#grip" x="3802" y="1062"/><use href="#grip" x="3802" y="1100"/><use href="#grip" x="3802" y="1138"/><use href="#grip" x="3802" y="1176"/>
<path d="M3241 786l7 7 7-7" fill="none" stroke="#b4b4b4" stroke-width="1.600"/>
<g fill="none" stroke="#b4b4b4" stroke-width="1.600"><path d="M3245 946l6 6.500-6 6.500"/><path d="M3245 984l6 6.500-6 6.500"/><path d="M3245 1022l6 6.500-6 6.500"/><path d="M3245 1060l6 6.500-6 6.500"/><path d="M3245 1098l6 6.500-6 6.500"/><path d="M3245 1136l6 6.500-6 6.500"/><path d="M3245 1174l6 6.500-6 6.500"/></g>
<g>
<text x="3261" y="796" style="fill:#d8d8d8">Scene</text><text x="3261" y="959" style="fill:#d8d8d8">Units</text><text x="3282" y="997" style="fill:#d8d8d8">Gravity</text><text x="3261" y="1035" style="fill:#d8d8d8">Simulation</text><text x="3261" y="1073" style="fill:#d8d8d8">Keying Sets</text><text x="3261" y="1111" style="fill:#d8d8d8">Audio</text><text x="3261" y="1149" style="fill:#d8d8d8">Rigid Body World</text><text x="3261" y="1187" style="fill:#d8d8d8">Custom Properties</text>
</g>
<rect x="3259" y="982" width="19" height="19" rx="3" fill="#4772b3"/><path d="M3263 992l4 4 7-9" fill="none" stroke="#fff" stroke-width="2.200"/>
<text class="lbl" x="3463" y="839">Camera</text><text class="lbl" x="3463" y="875">Background Scene</text><text class="lbl" x="3463" y="911">Active Clip</text>
<g fill="#1d1d1d"><rect x="3479" y="821" width="335" height="26" rx="5"/><rect x="3479" y="856" width="335" height="26" rx="5"/><rect x="3479" y="892" width="335" height="26" rx="5"/></g>
<path d="M3485 828V824H3489M3500 824H3504V828M3485 840V844H3489M3500 844H3504V840" fill="none" stroke="#cfcfcf" stroke-width="1.300"/><rect x="3489" y="828" width="11" height="12" fill="#e2e2e2"/>
<path d="M3790 844 3800 830 3804 834 3794 845 3790 846Z" fill="#cfcfcf"/><path d="M3800 829 3806 824 3810 828 3805 834Z" fill="#e2e2e2"/>
<use href="#scene" x="3495" y="869"/>
<rect x="3486" y="906" width="18" height="10" fill="#e2e2e2"/><rect x="3486" y="901" width="18" height="3" fill="#e2e2e2"/><path d="M3490 899 3503 894" stroke="#e2e2e2" stroke-width="2.500" stroke-dasharray="3 2"/><rect x="3484" y="898" width="3" height="7" fill="none" stroke="#bbb"/>

<!-- TIMELINE -->
<rect x="0" y="1872" width="3172" height="151" rx="7" fill="#303030"/>
<rect x="0" y="1909" width="3172" height="34" fill="#1d1d1d"/>
<rect x="0" y="1943" width="3172" height="80" fill="#282828"/>
<rect x="118" y="1943" width="2936" height="80" fill="#303030"/>
<rect x="0" y="1943" width="3172" height="65" fill="url(#ticks)"/>
<rect class="btn" x="13" y="1879" width="44" height="26" rx="5"/><circle cx="28" cy="1892" r="11" fill="#eaeaea"/><path d="M30 1886l-6 6 6 6" fill="none" stroke="#303030" stroke-width="3"/><path class="ch" d="M44 1890l3.500 4 3.500-4"/>
<rect class="btn" x="64" y="1879" width="196" height="26" rx="5"/><line x1="170" y1="1879" x2="170" y2="1905" stroke="#3a3a3a"/>
<text x="76" y="1898">Playback</text><path class="ch" d="M157 1890l3.500 4 3.500-4"/><text x="181" y="1898">Keying</text><path class="ch" d="M248 1890l3.500 4 3.500-4"/>
<text x="275" y="1898">View</text><text x="335" y="1898">Marker</text>
<rect x="1453" y="1878" width="55" height="27" rx="5" fill="#282828"/><path d="M1458 1878H1481V1905H1458a5 5 0 0 1-5-5V1883a5 5 0 0 1 5-5Z" fill="#545454"/><ellipse cx="1467" cy="1892" rx="6.500" ry="6.500" fill="#e8e8e8"/><path d="M1491 1890l3 4 3-4" fill="none" stroke="#666" stroke-width="1.500"/>
<rect x="1518" y="1878" width="172" height="27" rx="5" fill="#545454"/>
<path d="M1545.500 1878V1905M1574 1878V1905M1604 1878V1905M1633 1878V1905M1662 1878V1905" stroke="#444"/>
<g fill="#e8e8e8"><rect x="1524" y="1883" width="2.500" height="18"/><path d="M1538 1884V1900L1528 1892Z"/><path d="M1556 1884 1561 1892 1556 1900 1551 1892Z"/><path d="M1551 1885V1899L1546.500 1892Z"/><path d="M1567 1885V1899L1562.500 1892Z"/><path d="M1596 1881V1903L1581 1892Z"/><path d="M1612 1881V1903L1627 1892Z"/><path d="M1640 1885V1899L1645 1892Z"/><path d="M1652 1884 1657 1892 1652 1900 1647 1892Z"/><path d="M1670 1884V1900L1680 1892Z"/><rect x="1681" y="1883" width="2.500" height="18"/></g>
<rect x="2762" y="1878" width="106" height="27" rx="5" fill="#545454"/><text x="2814" y="1898" style="text-anchor:middle">1</text>
<rect x="2877" y="1878" width="285" height="27" rx="5" fill="#545454"/><rect x="2877" y="1878" width="27" height="27" rx="5" fill="#3c3c3c"/><line x1="3036" y1="1878" x2="3036" y2="1905" stroke="#3c3c3c" stroke-width="1.500"/>
<circle cx="2890" cy="1894" r="8" fill="none" stroke="#e2e2e2" stroke-width="1.800"/><path d="M2886 1882H2894M2890 1882V1886M2890 1889V1894H2894" fill="none" stroke="#e2e2e2" stroke-width="1.600"/>
<text x="2928" y="1898">Start</text><text x="3020" y="1898" style="text-anchor:end">1</text><text x="3059" y="1898">End</text><text x="3141" y="1898" style="text-anchor:end">250</text>
<g>
<text class="rul" x="224.500" y="1934">10</text><text class="rul" x="342.400" y="1934">20</text><text class="rul" x="460.300" y="1934">30</text><text class="rul" x="578.200" y="1934">40</text><text class="rul" x="696.100" y="1934">50</text><text class="rul" x="814" y="1934">60</text><text class="rul" x="931.900" y="1934">70</text><text class="rul" x="1049.800" y="1934">80</text><text class="rul" x="1167.700" y="1934">90</text><text class="rul" x="1285.600" y="1934">100</text><text class="rul" x="1403.500" y="1934">110</text><text class="rul" x="1521.400" y="1934">120</text><text class="rul" x="1639.300" y="1934">130</text><text class="rul" x="1757.200" y="1934">140</text><text class="rul" x="1875.100" y="1934">150</text><text class="rul" x="1993" y="1934">160</text><text class="rul" x="2110.900" y="1934">170</text><text class="rul" x="2228.800" y="1934">180</text><text class="rul" x="2346.700" y="1934">190</text><text class="rul" x="2464.600" y="1934">200</text><text class="rul" x="2582.500" y="1934">210</text><text class="rul" x="2700.400" y="1934">220</text><text class="rul" x="2818.300" y="1934">230</text><text class="rul" x="2936.200" y="1934">240</text><text class="rul" x="3054.100" y="1934">250</text>
</g>
<rect x="116.500" y="1940" width="2" height="83" fill="#4772b3"/>
<rect x="100" y="1913" width="35" height="27" rx="6" fill="#4772b3"/><text x="117.500" y="1933" style="text-anchor:middle;fill:#fff">1</text>
<path d="M3 1932l4 5-4 5" fill="none" stroke="#666" stroke-width="1.500"/>
<rect x="3164" y="1922" width="8" height="72" rx="3" fill="#333"/><path d="M3170 1933l-3 5 3 5" fill="none" stroke="#888" stroke-width="1.300"/>
<rect x="13" y="2008" width="3146" height="13" rx="6.500" fill="#585858"/>
<circle cx="19" cy="2014.500" r="4.500" fill="#333"/><circle cx="3153" cy="2014.500" r="4.500" fill="#333"/>
<rect x="116.500" y="2021" width="2" height="2" fill="#4772b3"/>

<!-- STATUS -->
<rect x="0" y="2023" width="3840" height="33" fill="#181818"/>
<use href="#mouse" x="24" y="2040"/><rect x="18" y="2029" width="6.500" height="11" fill="#b0b0b0"/><text class="st" x="50" y="2046">Select</text>
<use href="#mouse" x="375" y="2040"/><rect x="373.500" y="2031" width="3" height="7" fill="#b0b0b0"/><text class="st" x="400" y="2046">Rotate View</text>
<use href="#mouse" x="725" y="2040"/><rect x="725" y="2029" width="6.500" height="11" fill="#b0b0b0"/><text class="st" x="751" y="2046">Object</text>
<text x="3822" y="2046" style="fill:#8a8a8a;text-anchor:end">4.0.0</text>
</svg>
</body></html>
